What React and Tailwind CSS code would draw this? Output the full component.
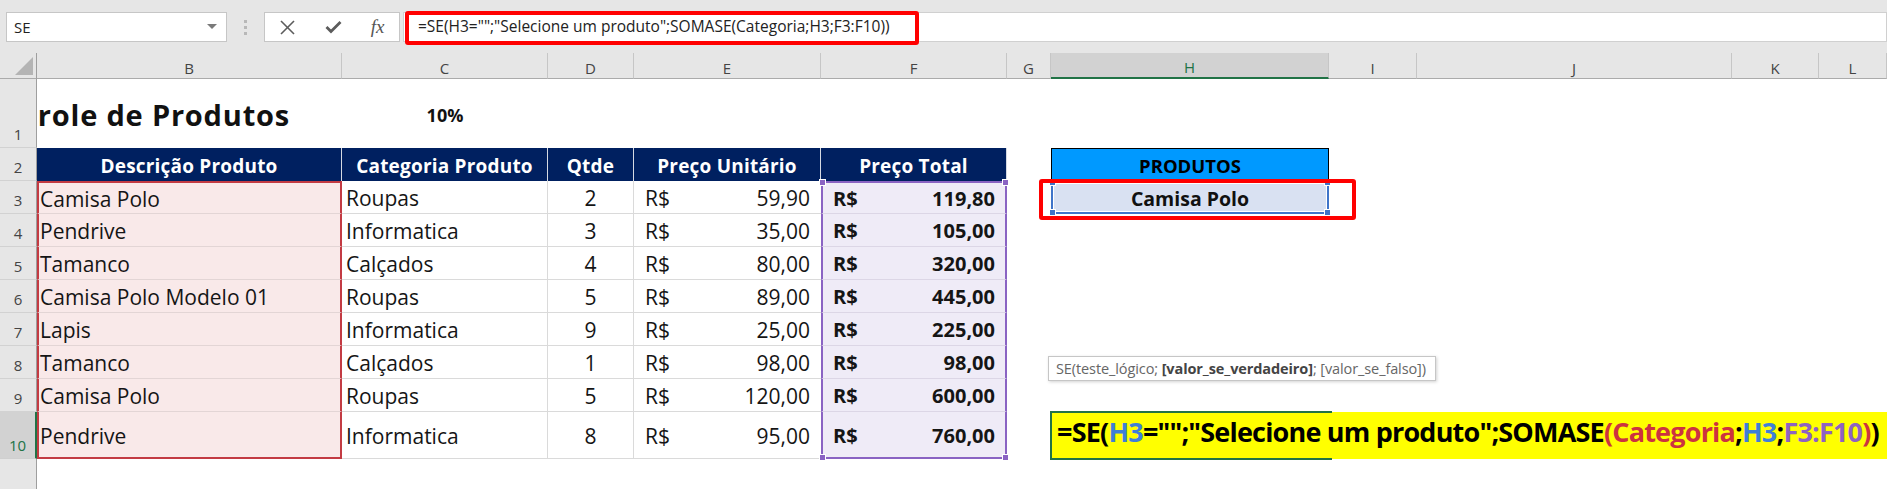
import React from "react";

const data = [
  { b: "Camisa Polo", c: "Roupas", d: 2, e: "59,90", f: "119,80" },
  { b: "Pendrive", c: "Informatica", d: 3, e: "35,00", f: "105,00" },
  { b: "Tamanco", c: "Calçados", d: 4, e: "80,00", f: "320,00" },
  { b: "Camisa Polo Modelo 01", c: "Roupas", d: 5, e: "89,00", f: "445,00" },
  { b: "Lapis", c: "Informatica", d: 9, e: "25,00", f: "225,00" },
  { b: "Tamanco", c: "Calçados", d: 1, e: "98,00", f: "98,00" },
  { b: "Camisa Polo", c: "Roupas", d: 5, e: "120,00", f: "600,00" },
  { b: "Pendrive", c: "Informatica", d: 8, e: "95,00", f: "760,00" },
];

function RowHead({ n, active }) {
  if (active) {
    return (
      <div className="flex items-end justify-center pb-[3px] bg-[#d2d2d2] text-[#217346] border-r-2 border-r-[#217346] border-b border-b-[#cfcfcf] text-[15px] leading-[20px]">
        {n}
      </div>
    );
  }
  return (
    <div className="flex items-end justify-center pb-[3px] bg-[#e6e6e6] text-[#444] border-r border-r-[#9e9e9e] border-b border-b-[#d2d2d2] text-[15px] leading-[20px]">
      {n}
    </div>
  );
}

function ColHead({ label, active }) {
  if (active) {
    return (
      <div className="flex items-end justify-center bg-[#d2d2d2] border-r border-r-[#c6c6c6] border-b-2 border-b-[#217346] text-[#217346] text-[15px] leading-[20px]">
        {label}
      </div>
    );
  }
  return (
    <div className="flex items-end justify-center bg-[#e6e6e6] border-r border-r-[#c6c6c6] border-b border-b-[#ababab] text-[#444] text-[15px] leading-[20px]">
      {label}
    </div>
  );
}

function Handle({ pos, color }) {
  const cls = {
    tl: "absolute -left-[4px] -top-[4px]",
    tr: "absolute -right-[4px] -top-[4px]",
    bl: "absolute -left-[4px] -bottom-[4px]",
    br: "absolute -right-[4px] -bottom-[4px]",
  }[pos];
  const col = color === "blue" ? "bg-[#3f74c9]" : "bg-[#8a63c3]";
  return <div className={`${cls} ${col} w-[7px] h-[7px] border border-white z-10`} />;
}

function BCell({ i, text }) {
  let cls;
  if (i === 0)
    cls =
      "flex items-center pt-[2px] pl-[1px] bg-[#f9e9e9] border-x-2 border-x-[#c33b43] border-t-2 border-t-[#c33b43] border-b border-b-[#e3d5d5]";
  else if (i === 7)
    cls =
      "flex items-center pt-[2px] pl-[1px] bg-[#f9e9e9] border-x-2 border-x-[#c33b43] border-b-2 border-b-[#c33b43]";
  else
    cls =
      "flex items-center pt-[2px] pl-[1px] bg-[#f9e9e9] border-x-2 border-x-[#c33b43] border-b border-b-[#e3d5d5]";
  return <div className={cls}>{text}</div>;
}

function FCell({ i, text }) {
  let cls;
  if (i === 0)
    cls =
      "relative flex items-center justify-between pt-[2px] px-[10px] bg-[#efebf7] border-x-2 border-x-[#8a63c3] border-t-2 border-t-[#8a63c3] border-b border-b-[#dcd6e6] font-bold text-[20px]";
  else if (i === 7)
    cls =
      "relative flex items-center justify-between pt-[2px] px-[10px] bg-[#efebf7] border-x-2 border-x-[#8a63c3] border-b-2 border-b-[#8a63c3] font-bold text-[20px]";
  else
    cls =
      "relative flex items-center justify-between pt-[2px] px-[10px] bg-[#efebf7] border-x-2 border-x-[#8a63c3] border-b border-b-[#dcd6e6] font-bold text-[20px]";
  return (
    <div className={cls}>
      <span>R$</span>
      <span>{text}</span>
      {i === 0 && (
        <>
          <Handle pos="tl" color="purple" />
          <Handle pos="tr" color="purple" />
        </>
      )}
      {i === 7 && (
        <>
          <Handle pos="bl" color="purple" />
          <Handle pos="br" color="purple" />
        </>
      )}
    </div>
  );
}

function TopBar() {
  return (
    <div className="h-[53px] bg-[#e6e6e6] flex items-start pt-[12px] font-['Open_Sans',sans-serif]">
      <div className="ml-[6px] w-[221px] h-[30px] bg-white border border-[#c6c6c6] flex items-center justify-between pl-[7px] pr-[9px]">
        <span className="text-[15px] text-[#222]">SE</span>
        <svg width="10" height="6" viewBox="0 0 10 6">
          <polygon points="0,0 10,0 5,5" fill="#7a7a7a" />
        </svg>
      </div>
      <div className="w-[37px] h-[30px] flex flex-col items-center justify-center gap-[3px]">
        <div className="w-[3px] h-[3px] bg-[#b8b8b8]" />
        <div className="w-[3px] h-[3px] bg-[#b8b8b8]" />
        <div className="w-[3px] h-[3px] bg-[#b8b8b8]" />
      </div>
      <div className="w-[136px] h-[30px] bg-white border border-[#c6c6c6] flex items-center">
        <div className="w-[45px] flex justify-center">
          <svg width="15" height="15" viewBox="0 0 15 15">
            <line x1="1" y1="1" x2="14" y2="14" stroke="#5c5c5c" strokeWidth="1.6" />
            <line x1="14" y1="1" x2="1" y2="14" stroke="#5c5c5c" strokeWidth="1.6" />
          </svg>
        </div>
        <div className="w-[46px] flex justify-center">
          <svg width="17" height="14" viewBox="0 0 17 14">
            <polyline points="1.5,7 6,11.5 15.5,2" fill="none" stroke="#5c5c5c" strokeWidth="2.8" />
          </svg>
        </div>
        <div className="w-[43px] flex justify-center">
          <span className="font-['Liberation_Serif',serif] italic text-[19px] leading-[20px] text-[#555]">fx</span>
        </div>
      </div>
      <div className="relative ml-[3px] flex-1 h-[30px] bg-white border border-[#d0d0d0] flex items-center pl-[14px] text-[15.5px] text-[#222] whitespace-nowrap">
        =SE(H3="";"Selecione um produto";SOMASE(Categoria;H3;F3:F10))
        <div className="absolute left-[1px] -top-[2px] w-[514px] h-[34px] border-[4px] border-[#ff0000] rounded-[3px] pointer-events-none" />
      </div>
    </div>
  );
}

export default function App() {
  const cells = [];
  cells.push(
    <div key="corner" className="flex items-end justify-end pr-[3px] pb-[3px] bg-[#e6e6e6] border-r border-r-[#9e9e9e] border-b border-b-[#ababab]">
      <svg width="18" height="18" viewBox="0 0 18 18">
        <polygon points="18,0 18,18 0,18" fill="#b4b4b4" />
      </svg>
    </div>
  );
  ["B", "C", "D", "E", "F", "G", "H", "I", "J", "K", "L"].forEach((l) =>
    cells.push(<ColHead key={"h" + l} label={l} active={l === "H"} />)
  );

  cells.push(<RowHead key="r1" n={1} />);
  cells.push(
    <div key="b1" className="flex items-center justify-end overflow-hidden pr-[52px] pt-[3px]">
      <span className="whitespace-nowrap text-[29px] font-bold text-[#111] tracking-[0.8px]">Controle de Produtos</span>
    </div>
  );
  cells.push(
    <div key="c1" className="flex items-center justify-center pt-[2px] text-[18px] font-bold text-[#111]">
      10%
    </div>
  );
  cells.push(<div key="rest1" className="col-span-9" />);

  cells.push(<RowHead key="r2" n={2} />);
  ["Descrição Produto", "Categoria Produto", "Qtde", "Preço Unitário", "Preço Total"].forEach((h) =>
    cells.push(
      <div key={"t" + h} className="flex items-center justify-center pt-[2px] bg-[#002060] text-white font-bold text-[19px] tracking-[0.2px] border-r border-r-[#d5d9e2]">
        {h}
      </div>
    )
  );
  cells.push(<div key="g2" />);
  cells.push(
    <div key="h2" className="flex items-center justify-center pt-[2px] bg-[#0099ff] border border-black font-bold text-[18.5px] text-black">
      PRODUTOS
    </div>
  );
  cells.push(<div key="rest2" className="col-span-4" />);

  data.forEach((r, i) => {
    const n = i + 3;
    cells.push(<RowHead key={"r" + n} n={n} active={i === 7} />);
    cells.push(<BCell key={"b" + n} i={i} text={r.b} />);
    cells.push(
      <div key={"c" + n} className="flex items-center pt-[2px] pl-[4px] border-r border-r-[#dadada] border-b border-b-[#dadada]">
        {r.c}
      </div>
    );
    cells.push(
      <div key={"d" + n} className="flex items-center justify-center pt-[2px] border-r border-r-[#dadada] border-b border-b-[#dadada]">
        {r.d}
      </div>
    );
    cells.push(
      <div key={"e" + n} className="flex items-center justify-between pt-[2px] px-[11px] border-b border-b-[#dadada]">
        <span>R$</span>
        <span>{r.e}</span>
      </div>
    );
    cells.push(<FCell key={"f" + n} i={i} text={r.f} />);
    cells.push(<div key={"g" + n} />);
    if (i === 0) {
      cells.push(
        <div key="h3" className="relative flex items-center justify-center pt-[2px] bg-[#d9e1f2] border-2 border-[#3f74c9] font-bold text-[19.5px] text-[#111]">
          <div className="absolute inset-0 border border-white pointer-events-none" />
          Camisa Polo
          <Handle pos="tl" color="blue" />
          <Handle pos="tr" color="blue" />
          <Handle pos="bl" color="blue" />
          <Handle pos="br" color="blue" />
          <div className="absolute -left-[14px] -top-[4px] -right-[29px] -bottom-[8px] border-[4px] border-[#ff0000] rounded-[3px] pointer-events-none z-20" />
        </div>
      );
    } else if (i === 5) {
      cells.push(
        <div key="h8" className="relative">
          <div className="absolute -left-[3px] top-[10px] w-[388px] h-[25px] bg-white border border-[#c6c6c6] shadow-[1px_1px_3px_rgba(0,0,0,0.18)] z-20 flex items-center pl-[7px] whitespace-nowrap text-[14.5px] text-[#666] tracking-[-0.1px]">
            SE(teste_lógico;&nbsp;<span className="font-bold text-[#444]">[valor_se_verdadeiro]</span>; [valor_se_falso])
          </div>
        </div>
      );
    } else if (i === 7) {
      cells.push(
        <div key="h10" className="col-span-5 relative bg-[#ffff00] flex items-center pb-[8px] pl-[6px] whitespace-nowrap font-bold text-[27px] tracking-[-0.8px] text-black">
          <div className="absolute -left-[1px] -top-[1px] w-[282px] h-[49px] border-l-2 border-t-2 border-b-2 border-[#217346] pointer-events-none" />
          <span>=SE(</span>
          <span className="text-[#3f7fd7]">H3</span>
          <span>="";"Selecione um produto";SOMASE</span>
          <span className="text-[#cc3340]">(Categoria</span>
          <span>;</span>
          <span className="text-[#3f7fd7]">H3</span>
          <span>;</span>
          <span className="text-[#8e62c2]">F3:F10</span>
          <span className="text-[#cc3340]">)</span>
          <span>)</span>
        </div>
      );
    } else {
      cells.push(<div key={"h" + n} />);
    }
    if (i !== 7) cells.push(<div key={"rest" + n} className="col-span-4" />);
  });

  cells.push(<div key="r11" className="bg-[#e6e6e6] border-r border-r-[#9e9e9e]" />);
  cells.push(<div key="rest11" className="col-span-11" />);

  return (
    <div className="w-[1887px] h-[489px] overflow-hidden bg-white font-['Open_Sans',sans-serif]">
      <TopBar />
      <div className="grid h-[436px] grid-cols-[37px_305px_206px_86px_187px_186px_44px_278px_88px_315px_87px_1fr] grid-rows-[26px_69px_33px_33px_33px_33px_33px_33px_33px_33px_47px_1fr] text-[21px] leading-[28px] text-[#151515]">
        {cells}
      </div>
    </div>
  );
}
